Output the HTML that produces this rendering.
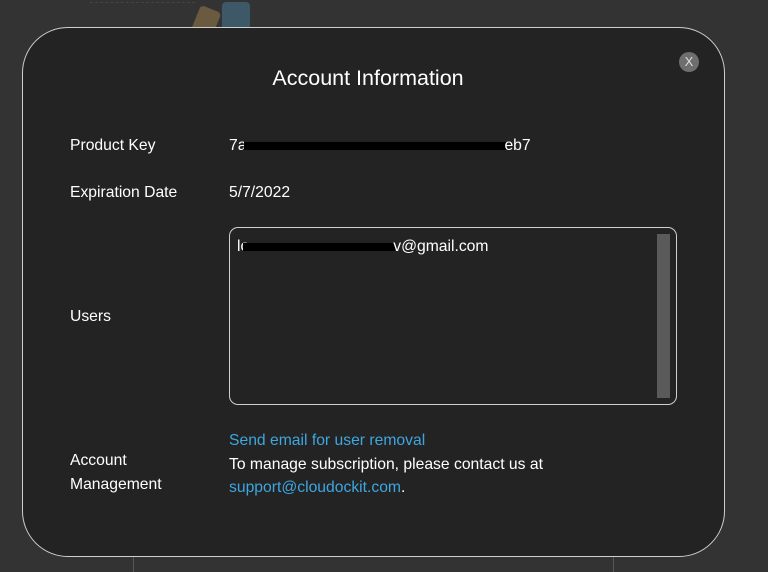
<!DOCTYPE html>
<html><head><style>
body{margin:0;width:768px;height:572px;background:#333;position:relative;overflow:hidden;font-family:"Liberation Sans","DejaVu Sans",sans-serif;color:#fff}
.m{position:absolute;left:22px;top:27px;width:703px;height:530px;background:#232323;border:1.5px solid #cfcfcf;border-radius:46px;box-sizing:border-box}
.t{position:absolute;font-size:15.7px}
.k{position:absolute;left:70px;font-size:15.7px}
.a{color:#3ea6e0}
</style></head><body>
<div style="position:absolute;left:90px;top:2px;width:105px;border-top:1px dashed #444"></div>
<div style="position:absolute;left:133px;top:556px;width:1px;height:16px;background:#555"></div>
<div style="position:absolute;left:613px;top:556px;width:1px;height:16px;background:#555"></div>
<div style="position:absolute;left:195px;top:8px;width:22px;height:28px;background:#6a5a40;border-radius:4px;transform:rotate(22deg)"></div>
<div style="position:absolute;left:222px;top:2px;width:28px;height:34px;background:#3d5866;border-radius:4px"></div>
<div class="m"></div>
<div style="position:absolute;left:679px;top:52px;width:20px;height:20px;border-radius:50%;background:#6e6e6e;color:#ddd;font-size:13px;text-align:center;line-height:20px">X</div>
<div class="t" style="left:0;width:736px;text-align:center;top:66px;font-size:21.5px">Account Information</div>
<div class="k" style="top:137px">Product Key</div>
<div class="t" style="left:229px;top:137px">7a<span style="display:inline-block;width:262px;height:8px;background:#000;vertical-align:middle;margin:0 -2px"></span>eb7</div>
<div class="k" style="top:184px">Expiration Date</div>
<div class="t" style="left:229px;top:184px">5/7/2022</div>
<div style="position:absolute;left:229px;top:227px;width:448px;height:178px;border:1.5px solid #cfcfcf;border-radius:9px;box-sizing:border-box"></div>
<div style="position:absolute;left:657px;top:234px;width:13px;height:164px;background:#5a5a5a"></div>
<div class="t" style="left:237px;top:238px">lo<span style="display:inline-block;width:152px;height:8px;background:#000;vertical-align:middle;margin:0 -2px 0 -6px"></span>v@gmail.com</div>
<div class="k" style="top:308px">Users</div>
<div class="k" style="top:449px;line-height:23.5px">Account<br>Management</div>
<div class="t a" style="left:229px;top:432px">Send email for user removal</div>
<div class="t" style="left:229px;top:456px">To manage subscription, please contact us at</div>
<div class="t" style="left:229px;top:479px"><span class="a">support@cloudockit.com</span>.</div>
</body></html>
